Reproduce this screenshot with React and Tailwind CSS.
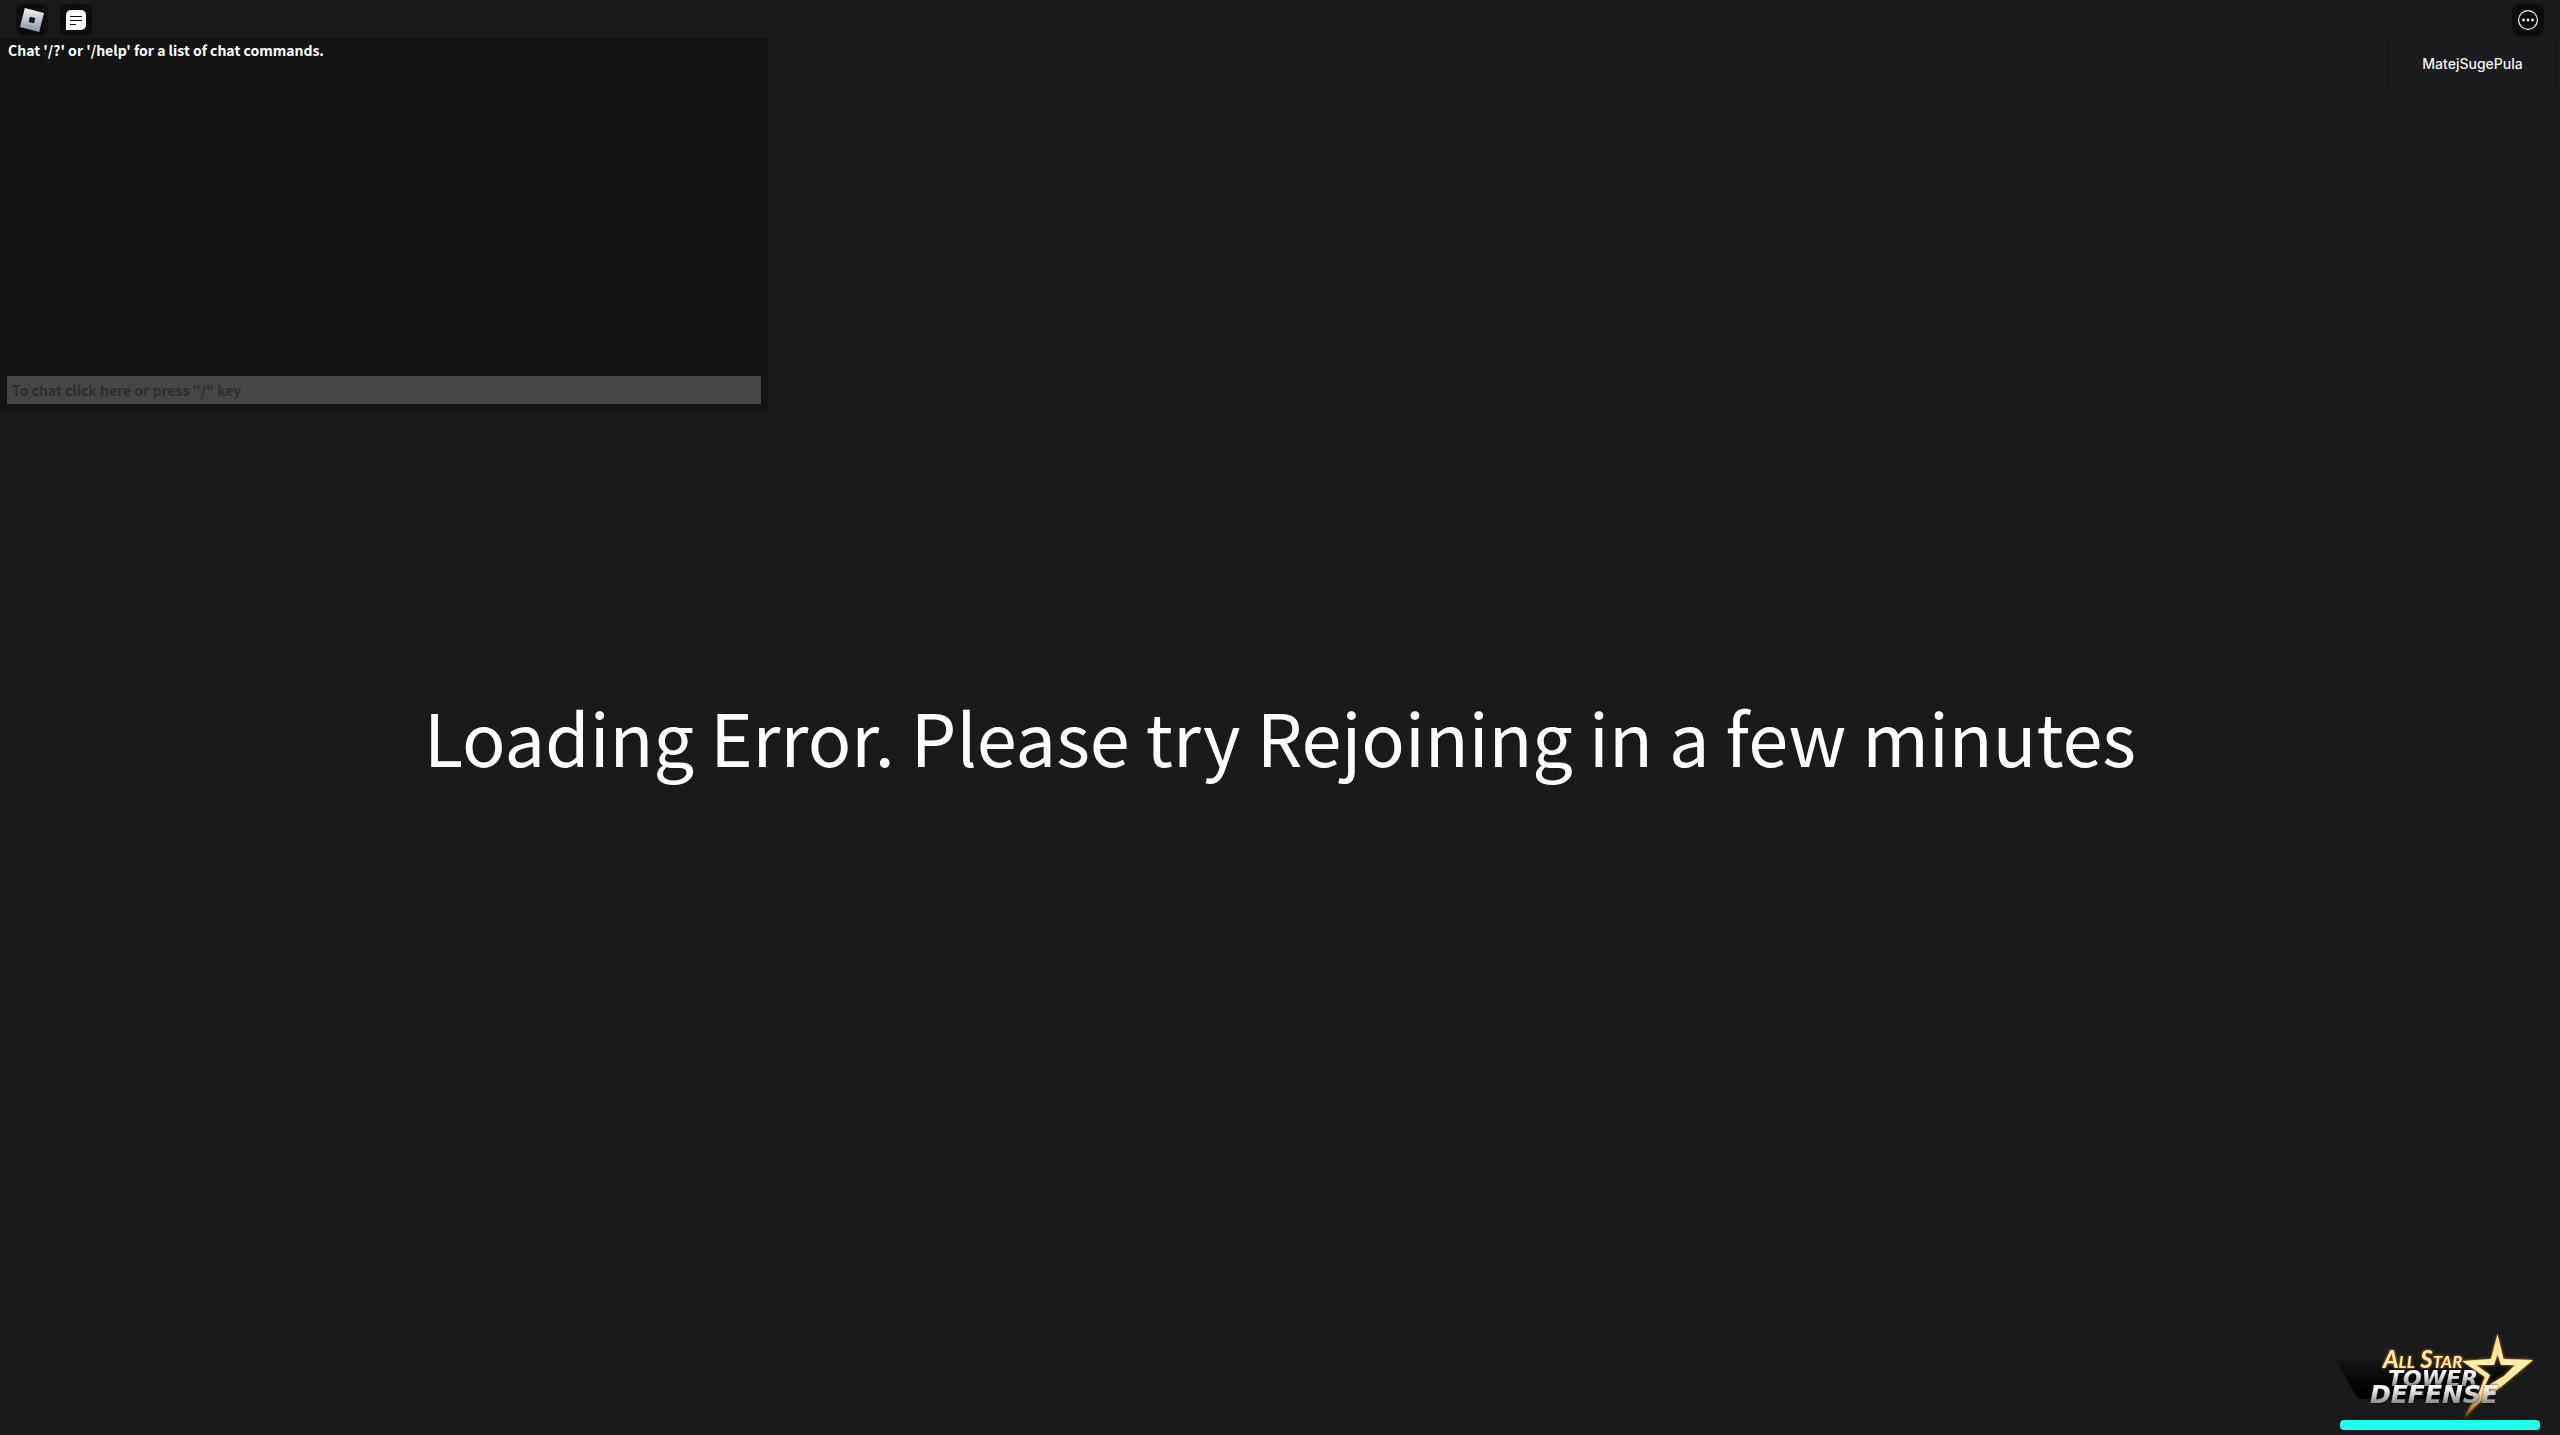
import { useState } from "react";

const RobloxIcon = () => (
  <svg viewBox="0 0 24 24" className="h-6 w-6">
    <defs>
      <linearGradient id="tilt" x1="0" y1="0" x2="0" y2="1">
        <stop offset="0" stopColor="#f4f6f8" />
        <stop offset="0.5" stopColor="#b9c3ce" />
        <stop offset="1" stopColor="#8794a5" />
      </linearGradient>
    </defs>
    <path
      fill="url(#tilt)"
      fillRule="evenodd"
      d="M4.8 0 24 4.9 19.2 24 0 19.1ZM10 8.7 8.7 14 14 15.3 15.3 10Z"
    />
  </svg>
);

const ChatIcon = () => (
  <svg viewBox="0 0 20 20" className="h-5 w-5">
    <path fill="#fff" d="M0 20V5a5 5 0 0 1 5-5h10a5 5 0 0 1 5 5v10a5 5 0 0 1-5 5Z" />
    <path stroke="#0d0d0d" d="M4 6.5h12M4 10.5h12M4 14.5h6" />
  </svg>
);

const MoreIcon = () => (
  <svg viewBox="0 0 20 20" className="h-5 w-5">
    <circle cx="10" cy="10" r="9.4" fill="none" stroke="#f2f2f2" strokeWidth="1.2" />
    <circle cx="5.5" cy="10" r="1.4" fill="#f2f2f2" />
    <circle cx="10" cy="10" r="1.4" fill="#f2f2f2" />
    <circle cx="14.5" cy="10" r="1.4" fill="#f2f2f2" />
  </svg>
);

const GameLogo = () => (
  <svg viewBox="0 0 200 90" className="h-[90px] w-[200px]" role="img" aria-label="All Star Tower Defense">
    <defs>
      <linearGradient id="plate" x1="0" y1="0" x2="0" y2="1">
        <stop offset="0" stopColor="#161616" />
        <stop offset="0.6" stopColor="#050505" />
        <stop offset="1" stopColor="#000" />
      </linearGradient>
      <linearGradient id="steel" x1="0" y1="0" x2="0" y2="1">
        <stop offset="0.3" stopColor="#f5f5f5" />
        <stop offset="0.8" stopColor="#8c8c8c" />
      </linearGradient>
      <linearGradient id="gold" x1="0" y1="0" x2="0" y2="1">
        <stop offset="0" stopColor="#ffd78c" />
        <stop offset="0.35" stopColor="#fff0b0" />
        <stop offset="0.7" stopColor="#ffe09a" />
        <stop offset="1" stopColor="#7a4a14" />
      </linearGradient>
      <filter id="glow" x="-20%" y="-20%" width="140%" height="140%">
        <feDropShadow dx="0" dy="0" stdDeviation="1.5" floodColor="#e08a1c" />
      </filter>
      <filter id="edge" x="-10%" y="-10%" width="120%" height="120%">
        <feDropShadow dx="0" dy="0" stdDeviation="1" floodColor="#000" />
      </filter>
    </defs>
    <path fill="url(#plate)" d="M0 30H190L150 69H22Z" />
    <path
      filter="url(#glow)"
      fill="url(#gold)"
      fillRule="evenodd"
      d="M161.5 4 167.500 29 197 30 166 56C156 64 138 74 129 88C133 76 142 68 145 57L149 47 126 31 155 29ZM161.5 24 158 35H140L154 45 148 58 168 46 179 35H165Z"
    />
    <g filter="url(#glow)">
      <text
        x="47"
        y="38"
        fontFamily="Lato, sans-serif"
        fontSize="24"
        fontWeight="700"
        fontStyle="italic"
        fill="#ffe9a8"
      >
        A<tspan fontSize="17">LL</tspan> S<tspan fontSize="17">TAR</tspan>
      </text>
    </g>
    <g fontFamily="'DejaVu Sans', sans-serif" fontWeight="700" fontStyle="italic" fill="url(#steel)">
      <text x="52" y="56" fontSize="22" filter="url(#edge)">TOWER</text>
      <text x="34" y="73" fontSize="25" filter="url(#edge)">DEFENSE</text>
    </g>
  </svg>
);

const App = () => {
  const [message, setMessage] = useState("");

  return (
    <div className="flex min-h-screen flex-col bg-[#1a1a1a] font-['Noto_Sans_CJK_SC',sans-serif] text-white">
      <header className="flex justify-between px-4 pt-1">
        <nav className="flex gap-3">
          <button aria-label="Menu" className="flex h-8 w-8 items-center justify-center rounded-lg bg-[#0d0d0d]">
            <RobloxIcon />
          </button>
          <button aria-label="Chat" className="flex h-8 w-8 items-center justify-center rounded-lg bg-[#0d0d0d]">
            <ChatIcon />
          </button>
        </nav>
        <button aria-label="More" className="flex h-8 w-8 items-center justify-center rounded-lg bg-[#0d0d0d]">
          <MoreIcon />
        </button>
      </header>

      <div className="flex items-start justify-between pt-[2px]">
        <section className="flex w-3/10 flex-col gap-[2px]">
          <div className="h-[329px] bg-[#141414] px-2 text-sm leading-6 font-bold">
            Chat '/?' or '/help' for a list of chat commands.
          </div>
          <form onSubmit={(e) => e.preventDefault()} className="bg-[#141414] p-[7px]">
            <input
              type="text"
              aria-label="Chat message"
              value={message}
              onChange={(e) => setMessage(e.target.value)}
              placeholder={'To chat click here or press "/" key'}
              className="block h-7 w-full bg-[#464646] px-[5px] text-sm font-bold outline-none placeholder:text-[#2e2e2e]"
            />
          </form>
        </section>
        <aside className="mt-[2px] mr-[5px] flex h-12 w-[165px] items-center justify-center rounded-sm bg-[#1b1c1e] font-[Inter,sans-serif] text-sm font-medium text-[#f2f2f2]">
          MatejSugePula
        </aside>
      </div>

      <main className="flex flex-1 justify-center pt-[273px]">
        <h1 className="text-7xl leading-[104px]">
          Loading Error. Please try Rejoining in a few minutes
        </h1>
      </main>

      <footer className="flex flex-col items-end pr-5 pb-[5px]">
        <div className="pr-1">
          <GameLogo />
        </div>
        <div className="h-[10px] w-[200px] rounded bg-[#1fffeb]" />
      </footer>
    </div>
  );
};

export default App;
